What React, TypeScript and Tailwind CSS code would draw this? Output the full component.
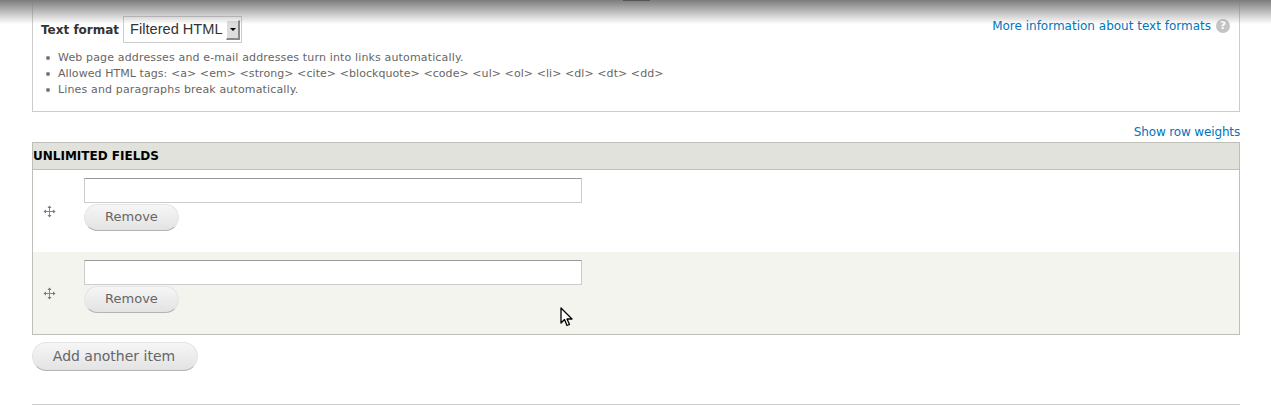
export default function App() {
  const Row = ({ alt }: { alt?: boolean }) => (
    <div className={`flex h-[82px] ${alt ? "bg-[#f3f4ee]" : "bg-white"}`}>
      <div className="w-[51px] pl-[10px] pt-[35px]">
        <svg width="13" height="13" viewBox="0 0 13 13" fill="none" stroke="#888" strokeWidth="1">
          <path d="M6.5 1v11M1 6.500h11" />
          <path d="M4.500 3 6.500 .5 8.500 3zM4.500 10l2 2.500 2-2.500zM3 4.500.5 6.500 3 8.500zM10 4.500l2.500 2-2.500 2z" fill="#777" stroke="none" />
        </svg>
      </div>
      <div className="pt-2">
        <div className="h-[25px] w-[498px] border border-[#ccc] border-t-[#999] bg-white" />
        <button className="mt-px block h-[27px] w-[95px] rounded-[20px] border border-[#e4e4e4] border-b-[#b4b4b4] bg-gradient-to-b from-[#f6f6f6] to-[#e3e3e3] pb-[2px] text-[13px] text-[#666]">
          Remove
        </button>
      </div>
    </div>
  );

  const Tip = ({ text, cls }: { text: string; cls: string }) => (
    <li className={`flex h-4 items-center ${cls}`}>
      <span className="mr-2 h-[4px] w-[4px] rounded-full bg-[#777]" />
      <span className="whitespace-nowrap">{text}</span>
    </li>
  );

  return (
    <div className="relative h-[405px] w-[1271px] overflow-hidden bg-white font-['DejaVu_Sans',sans-serif]">
      <div className="absolute inset-x-0 top-0 z-10 h-[24px] bg-gradient-to-b from-[#7c7c7c] to-[#ffffff00]">
        <div className="absolute left-[623px] top-0 h-px w-[27px] bg-[#555]" />
      </div>
      <div className="pl-[32px] pr-[31px]">
        <div className="h-[112px] border-x border-b border-[#ccc] px-2 pt-4">
          <div className="flex items-start justify-between">
            <div className="flex items-center">
              <span className="text-[12px] font-bold text-[#333]">Text format</span>
              <div className="ml-[4px] flex h-[27px] w-[119px] items-center justify-between whitespace-nowrap border border-[#ccc] pl-[6px] pr-px font-['Liberation_Sans',sans-serif] text-[14.6px] text-[#333]">
                <span>Filtered HTML</span>
                <span className="flex h-[20px] w-[14px] items-center justify-center border-b-2 border-l border-r-2 border-t border-b-[#888] border-l-white border-r-[#888] border-t-white bg-[#ddd]">
                  <span className="h-0 w-0 border-x-[3px] border-t-[3px] border-x-transparent border-t-black" />
                </span>
              </div>
            </div>
            <div className="flex items-center pr-px pt-px text-[12px] text-[#0074bd]">
              <span>More information about text formats</span>
              <span className="ml-[5px] flex h-[14px] w-[14px] items-center justify-center rounded-full bg-[#c4c4c4] text-[11px] font-bold text-white">?</span>
            </div>
          </div>
          <ul className="ml-[5px] mt-[7px] text-[11px] leading-4 text-[#666]">
            <Tip cls="tracking-[0.15px]" text="Web page addresses and e-mail addresses turn into links automatically." />
            <Tip cls="tracking-[0.065px]" text="Allowed HTML tags: <a> <em> <strong> <cite> <blockquote> <code> <ul> <ol> <li> <dl> <dt> <dd>" />
            <Tip cls="tracking-[0.15px]" text="Lines and paragraphs break automatically." />
          </ul>
        </div>
        <div className="mt-[11px] h-[19px] text-right text-[12px] leading-[18px] tracking-[-0.15px] text-[#0074bd]">Show row weights</div>
        <div className="border border-[#bebfb9]">
          <div className="h-[27px] border-b border-[#bebfb9] bg-[#e1e2dc] text-[12px] font-bold leading-[26px] text-black">UNLIMITED FIELDS</div>
          <Row />
          <Row alt />
        </div>
        <button className="mt-[7px] block h-[29px] w-[166px] rounded-[20px] border border-[#e4e4e4] border-b-[#b4b4b4] bg-gradient-to-b from-[#f6f6f6] to-[#e3e3e3] pr-[2px] text-[14px] text-[#666]">
          Add another item
        </button>
        <div className="mt-[33px] border-t border-[#ccc]" />
      </div>
      <svg className="absolute left-[560px] top-[307px] z-20" width="14" height="21" viewBox="0 0 14 21">
        <path d="M1 1v15l3.500-3.500L7 18.500l2.500-1-2.500-5.500h5z" fill="#fff" stroke="#000" strokeWidth="1.300" strokeLinejoin="round" />
      </svg>
    </div>
  );
}
